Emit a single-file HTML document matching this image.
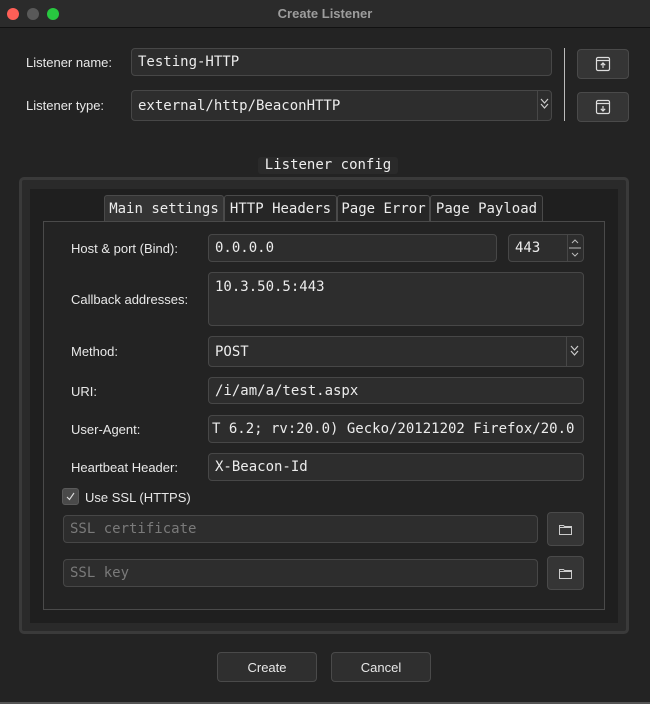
<!DOCTYPE html>
<html><head><style>
*{box-sizing:border-box;margin:0;padding:0}
body{width:650px;height:704px;background:#232323;font-family:"Liberation Sans",sans-serif;color:#e6e6e6;position:relative;overflow:hidden}
.a{position:absolute}
.lbl{position:absolute;font-size:13px;color:#e8e8e8}
.in{position:absolute;background:#2d2d2d;border:1px solid #474747;border-radius:4px;font-family:"DejaVu Sans Mono","Liberation Mono",monospace;font-size:14px;color:#ececec;padding-left:6px;display:flex;align-items:center;white-space:nowrap;overflow:hidden}
.btn{position:absolute;background:#353535;border:1px solid #4a4a4a;border-radius:4px;display:flex;align-items:center;justify-content:center;font-size:13px;color:#e8e8e8}
.tab{position:absolute;top:195px;height:26px;border:1px solid #4a4a4a;border-bottom:none;border-radius:3px 3px 0 0;background:#262626;font-family:"DejaVu Sans Mono",monospace;font-size:14px;color:#ececec;display:flex;align-items:center;justify-content:center}
</style></head><body>
<div class="a" style="left:0;top:0;width:650px;height:28px;background:#2b2b2b;border-bottom:1px solid #111"></div>
<div class="a" style="left:7px;top:8px;width:12px;height:12px;border-radius:50%;background:#fe5f57"></div>
<div class="a" style="left:27px;top:8px;width:12px;height:12px;border-radius:50%;background:#595959"></div>
<div class="a" style="left:47px;top:8px;width:12px;height:12px;border-radius:50%;background:#28c840"></div>
<div class="a" style="left:0;top:6px;width:650px;text-align:center;font-size:13px;font-weight:bold;color:#9d9d9d">Create Listener</div>

<div class="lbl" style="left:26px;top:55px">Listener name:</div>
<div class="in" style="left:131px;top:48px;width:421px;height:28px">Testing-HTTP</div>
<div class="lbl" style="left:26px;top:98px">Listener type:</div>
<div class="in" style="left:131px;top:90px;width:421px;height:31px">external/http/BeaconHTTP</div>
<div class="a" style="left:537px;top:91px;width:1px;height:29px;background:#474747"></div>
<svg class="a" style="left:539px;top:97px" width="11" height="14" viewBox="0 0 11 14" fill="none" stroke="#ccc" stroke-width="1.2"><path d="M2 2l3.5 4L9 2M2 7l3.5 4L9 7"/></svg>
<div class="a" style="left:564px;top:48px;width:1px;height:73px;background:#bbb"></div>
<div class="btn" style="left:577px;top:49px;width:52px;height:30px"><svg width="16" height="16" viewBox="0 0 16 16" fill="none" stroke="#ddd" stroke-width="1.2"><rect x="1.5" y="1.5" width="13" height="13" rx="1.5"/><path d="M1.5 4.5h13M8 12V7M5.8 9.2 8 7l2.2 2.2"/></svg></div>
<div class="btn" style="left:577px;top:92px;width:52px;height:30px"><svg width="16" height="16" viewBox="0 0 16 16" fill="none" stroke="#ddd" stroke-width="1.2"><rect x="1.5" y="1.5" width="13" height="13" rx="1.5"/><path d="M1.5 4.5h13M8 7v5M5.8 9.8 8 12l2.2-2.2"/></svg></div>

<div class="a" style="left:258px;top:157px;width:140px;height:17px;background:#2a2a2a;border-radius:3px;font-family:'DejaVu Sans Mono',monospace;font-size:14px;text-align:center;line-height:17px;color:#eee">Listener config</div>
<div class="a" style="left:19px;top:177px;width:610px;height:457px;border:3px solid #3a3a3a;border-radius:5px;background:#2a2a2a"></div>
<div class="a" style="left:30px;top:189px;width:588px;height:434px;background:#1f1f1f"></div>
<div class="a" style="left:43px;top:221px;width:562px;height:389px;border:1px solid #4a4a4a;background:#232323"></div>
<div class="tab" style="left:104px;width:120px;background:#343434">Main settings</div>
<div class="tab" style="left:224px;width:113px">HTTP Headers</div>
<div class="tab" style="left:337px;width:93px">Page Error</div>
<div class="tab" style="left:430px;width:113px">Page Payload</div>

<div class="lbl" style="left:71px;top:241px">Host &amp; port (Bind):</div>
<div class="in" style="left:208px;top:234px;width:289px;height:28px">0.0.0.0</div>
<div class="in" style="left:508px;top:234px;width:76px;height:28px">443</div>
<div class="a" style="left:567px;top:235px;width:16px;height:26px;border-left:1px solid #474747"></div>
<svg class="a" style="left:569px;top:237px" width="12" height="22" viewBox="0 0 12 22" fill="none" stroke="#bbb" stroke-width="1"><path d="M3 6l3-3 3 3M3 16l3 3 3-3M0 11h12"/></svg>
<div class="lbl" style="left:71px;top:292px">Callback addresses:</div>
<div class="in" style="left:208px;top:272px;width:376px;height:54px;align-items:flex-start;padding-top:6px">10.3.50.5:443</div>
<div class="lbl" style="left:71px;top:344px">Method:</div>
<div class="in" style="left:208px;top:336px;width:376px;height:31px">POST</div>
<div class="a" style="left:566px;top:337px;width:1px;height:29px;background:#474747"></div>
<svg class="a" style="left:569px;top:344px" width="11" height="14" viewBox="0 0 11 14" fill="none" stroke="#ccc" stroke-width="1.2"><path d="M2 2l3.5 4L9 2M2 7l3.5 4L9 7"/></svg>
<div class="lbl" style="left:71px;top:384px">URI:</div>
<div class="in" style="left:208px;top:377px;width:376px;height:27px">/i/am/a/test.aspx</div>
<div class="lbl" style="left:71px;top:422px">User-Agent:</div>
<div class="in" style="left:208px;top:415px;width:376px;height:28px;padding-left:3px">T 6.2; rv:20.0) Gecko/20121202 Firefox/20.0</div>
<div class="lbl" style="left:71px;top:460px">Heartbeat Header:</div>
<div class="in" style="left:208px;top:453px;width:376px;height:28px">X-Beacon-Id</div>
<div class="a" style="left:62px;top:488px;width:17px;height:17px;background:#4a4a4a;border:1px solid #5a5a5a;border-radius:3px"></div>
<svg class="a" style="left:64px;top:490px" width="13" height="13" viewBox="0 0 13 13" fill="none" stroke="#ddd" stroke-width="1.1"><path d="M3 7l2.5 2.5L10 3"/></svg>
<div class="lbl" style="left:85px;top:490px">Use SSL (HTTPS)</div>
<div class="in" style="left:63px;top:515px;width:475px;height:28px;color:#7a7a7a">SSL certificate</div>
<div class="btn" style="left:547px;top:512px;width:37px;height:34px"><svg width="13" height="11" viewBox="0 0 13 11" fill="none" stroke="#ccc"><path d="M.5 1.5h4l1 1h7v8h-12z M.5 3.5h12"/></svg></div>
<div class="in" style="left:63px;top:559px;width:475px;height:28px;color:#7a7a7a">SSL key</div>
<div class="btn" style="left:547px;top:556px;width:37px;height:34px"><svg width="13" height="11" viewBox="0 0 13 11" fill="none" stroke="#ccc"><path d="M.5 1.5h4l1 1h7v8h-12z M.5 3.5h12"/></svg></div>

<div class="btn" style="left:217px;top:652px;width:100px;height:30px;background:#2f2f2f">Create</div>
<div class="btn" style="left:331px;top:652px;width:100px;height:30px;background:#2f2f2f">Cancel</div>
<div class="a" style="left:0;top:702px;width:650px;height:2px;background:#555"></div>
</body></html>
